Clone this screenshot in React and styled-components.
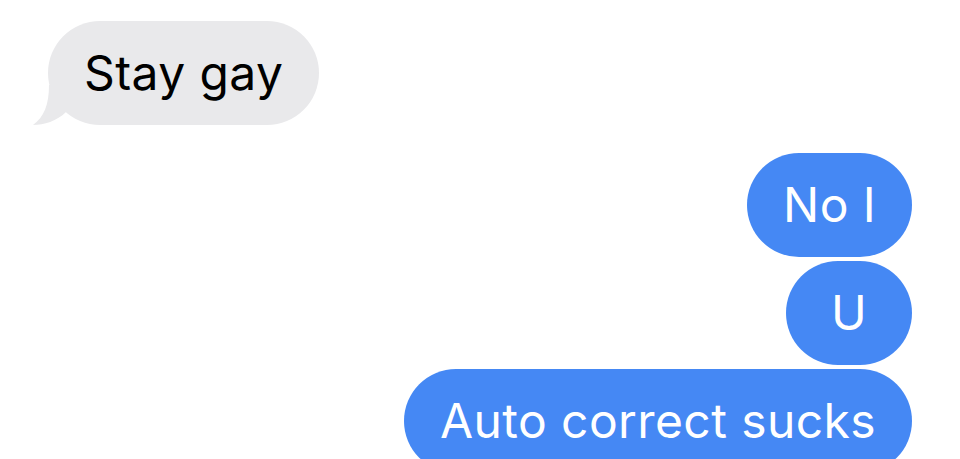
import React from 'react';
import styled, { createGlobalStyle } from 'styled-components';

const GlobalStyle = createGlobalStyle`
  body {
    margin: 0;
    background: #ffffff;
    font-family: 'Inter', 'Liberation Sans', sans-serif;
  }
`;

const messages = [
  { id: 1, text: 'Stay gay', fromMe: false, tail: true },
  { id: 2, text: 'No I', fromMe: true },
  { id: 3, text: 'U', fromMe: true },
  { id: 4, text: 'Auto correct sucks', fromMe: true },
];

const App = () => {
  return (
    <>
      <GlobalStyle />
      <Thread>
        {messages.map((m, index) => {
          const prev = messages[index - 1];
          const newGroup = prev && prev.fromMe !== m.fromMe;
          return (
            <Row key={m.id} $fromMe={m.fromMe} $newGroup={newGroup}>
              <Bubble $fromMe={m.fromMe}>
                {m.text}
                {m.tail && (
                  <Tail width="40" height="40" viewBox="0 0 40 40">
                    <path d="M17 0 C17 20 12 32 1 40 C12 40 25 36 34 27 L34 0 Z" fill="#e9e9eb" />
                  </Tail>
                )}
              </Bubble>
            </Row>
          );
        })}
      </Thread>
    </>
  );
};

const Thread = styled.div`
  display: flex;
  flex-direction: column;
  padding: 21px 48px 0 48px;
  gap: 4px;
`;

const Row = styled.div`
  display: flex;
  justify-content: ${(p) => (p.$fromMe ? 'flex-end' : 'flex-start')};
  margin-top: ${(p) => (p.$newGroup ? '24px' : '0')};
`;

const Bubble = styled.div`
  position: relative;
  box-sizing: border-box;
  min-width: 126px;
  padding: 23px 36px;
  border-radius: 52px;
  font-size: 48px;
  line-height: 58px;
  letter-spacing: 0.4px;
  text-align: center;
  white-space: nowrap;
  color: ${(p) => (p.$fromMe ? '#ffffff' : '#000000')};
  background: ${(p) => (p.$fromMe ? '#4588f4' : '#e9e9eb')};
`;

const Tail = styled.svg`
  position: absolute;
  left: -16px;
  bottom: 0;
  display: block;
`;

export default App;
